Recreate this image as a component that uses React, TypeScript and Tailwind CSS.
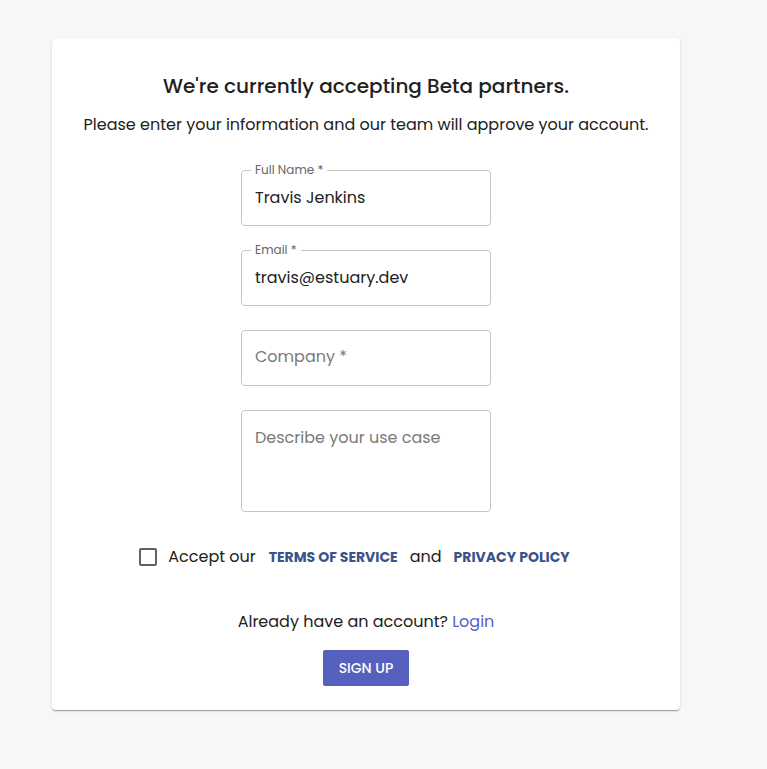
const font = { fontFamily: "Poppins, Inter, 'Noto Sans', sans-serif" };

function Field({ label, value }: { label: string; value?: string }) {
  return (
    <div className="relative h-[56px] w-[250px] rounded-[4px] border border-[#c4c4c4] px-[13px]">
      {value ? (
        <>
          <span className="absolute left-[9px] top-[-7px] bg-white px-[4px] text-[12px] leading-[12px] text-[#666666]">
            {label}
          </span>
          <div className="mt-[15px] text-[16px] leading-[24px] text-[#212121]">{value}</div>
        </>
      ) : (
        <div className="mt-[14px] text-[16px] leading-[24px] text-[#7a7a7a]">{label}</div>
      )}
    </div>
  );
}

export default function App() {
  return (
    <div className="min-h-screen bg-[#f7f7f7] pt-[38px] pl-[52px]" style={font}>
      <div className="flex w-[628px] flex-col items-center rounded-[4px] bg-white pt-[32px] pb-[24px] shadow-[0_2px_1px_-1px_rgba(0,0,0,0.2),0_1px_1px_0_rgba(0,0,0,0.14),0_1px_3px_0_rgba(0,0,0,0.12)]">
        <h1 className="text-[20px] font-medium leading-[32px] text-[#212121]">
          We're currently accepting Beta partners.
        </h1>
        <p className="mt-[11px] text-[16px] leading-[24px] text-[#212121]">
          Please enter your information and our team will approve your account.
        </p>

        <div className="mt-[33px] flex flex-col gap-[24px]">
          <Field label="Full Name *" value="Travis Jenkins" />
          <Field label="Email *" value="travis@estuary.dev" />
          <Field label="Company *" />
          <div className="h-[102px] w-[250px] rounded-[4px] border border-[#c4c4c4] px-[13px] pt-[15px] text-[16px] leading-[24px] text-[#7a7a7a]">
            Describe your use case
          </div>
        </div>

        <div className="mt-[36px] flex h-[18px] items-center pr-[23px] text-[16px] text-[#212121]">
          <span className="h-[18px] w-[18px] rounded-[2px] border-2 border-[#616161]" />
          <span className="ml-[11px]">Accept our</span>
          <span className="ml-[13px] text-[14px] font-bold uppercase text-[#3a5388]">Terms of Service</span>
          <span className="ml-[12px]">and</span>
          <span className="ml-[12px] text-[14px] font-bold uppercase text-[#3a5388]">Privacy Policy</span>
        </div>

        <p className="mt-[44px] text-[16px] leading-[24px] text-[#212121]">
          Already have an account? <span className="text-[#5660c4]">Login</span>
        </p>
        <button className="mt-[16px] h-[36px] w-[86px] rounded-[2px] bg-[#5660bf] text-[14px] font-medium uppercase text-white">
          Sign up
        </button>
      </div>
    </div>
  );
}
